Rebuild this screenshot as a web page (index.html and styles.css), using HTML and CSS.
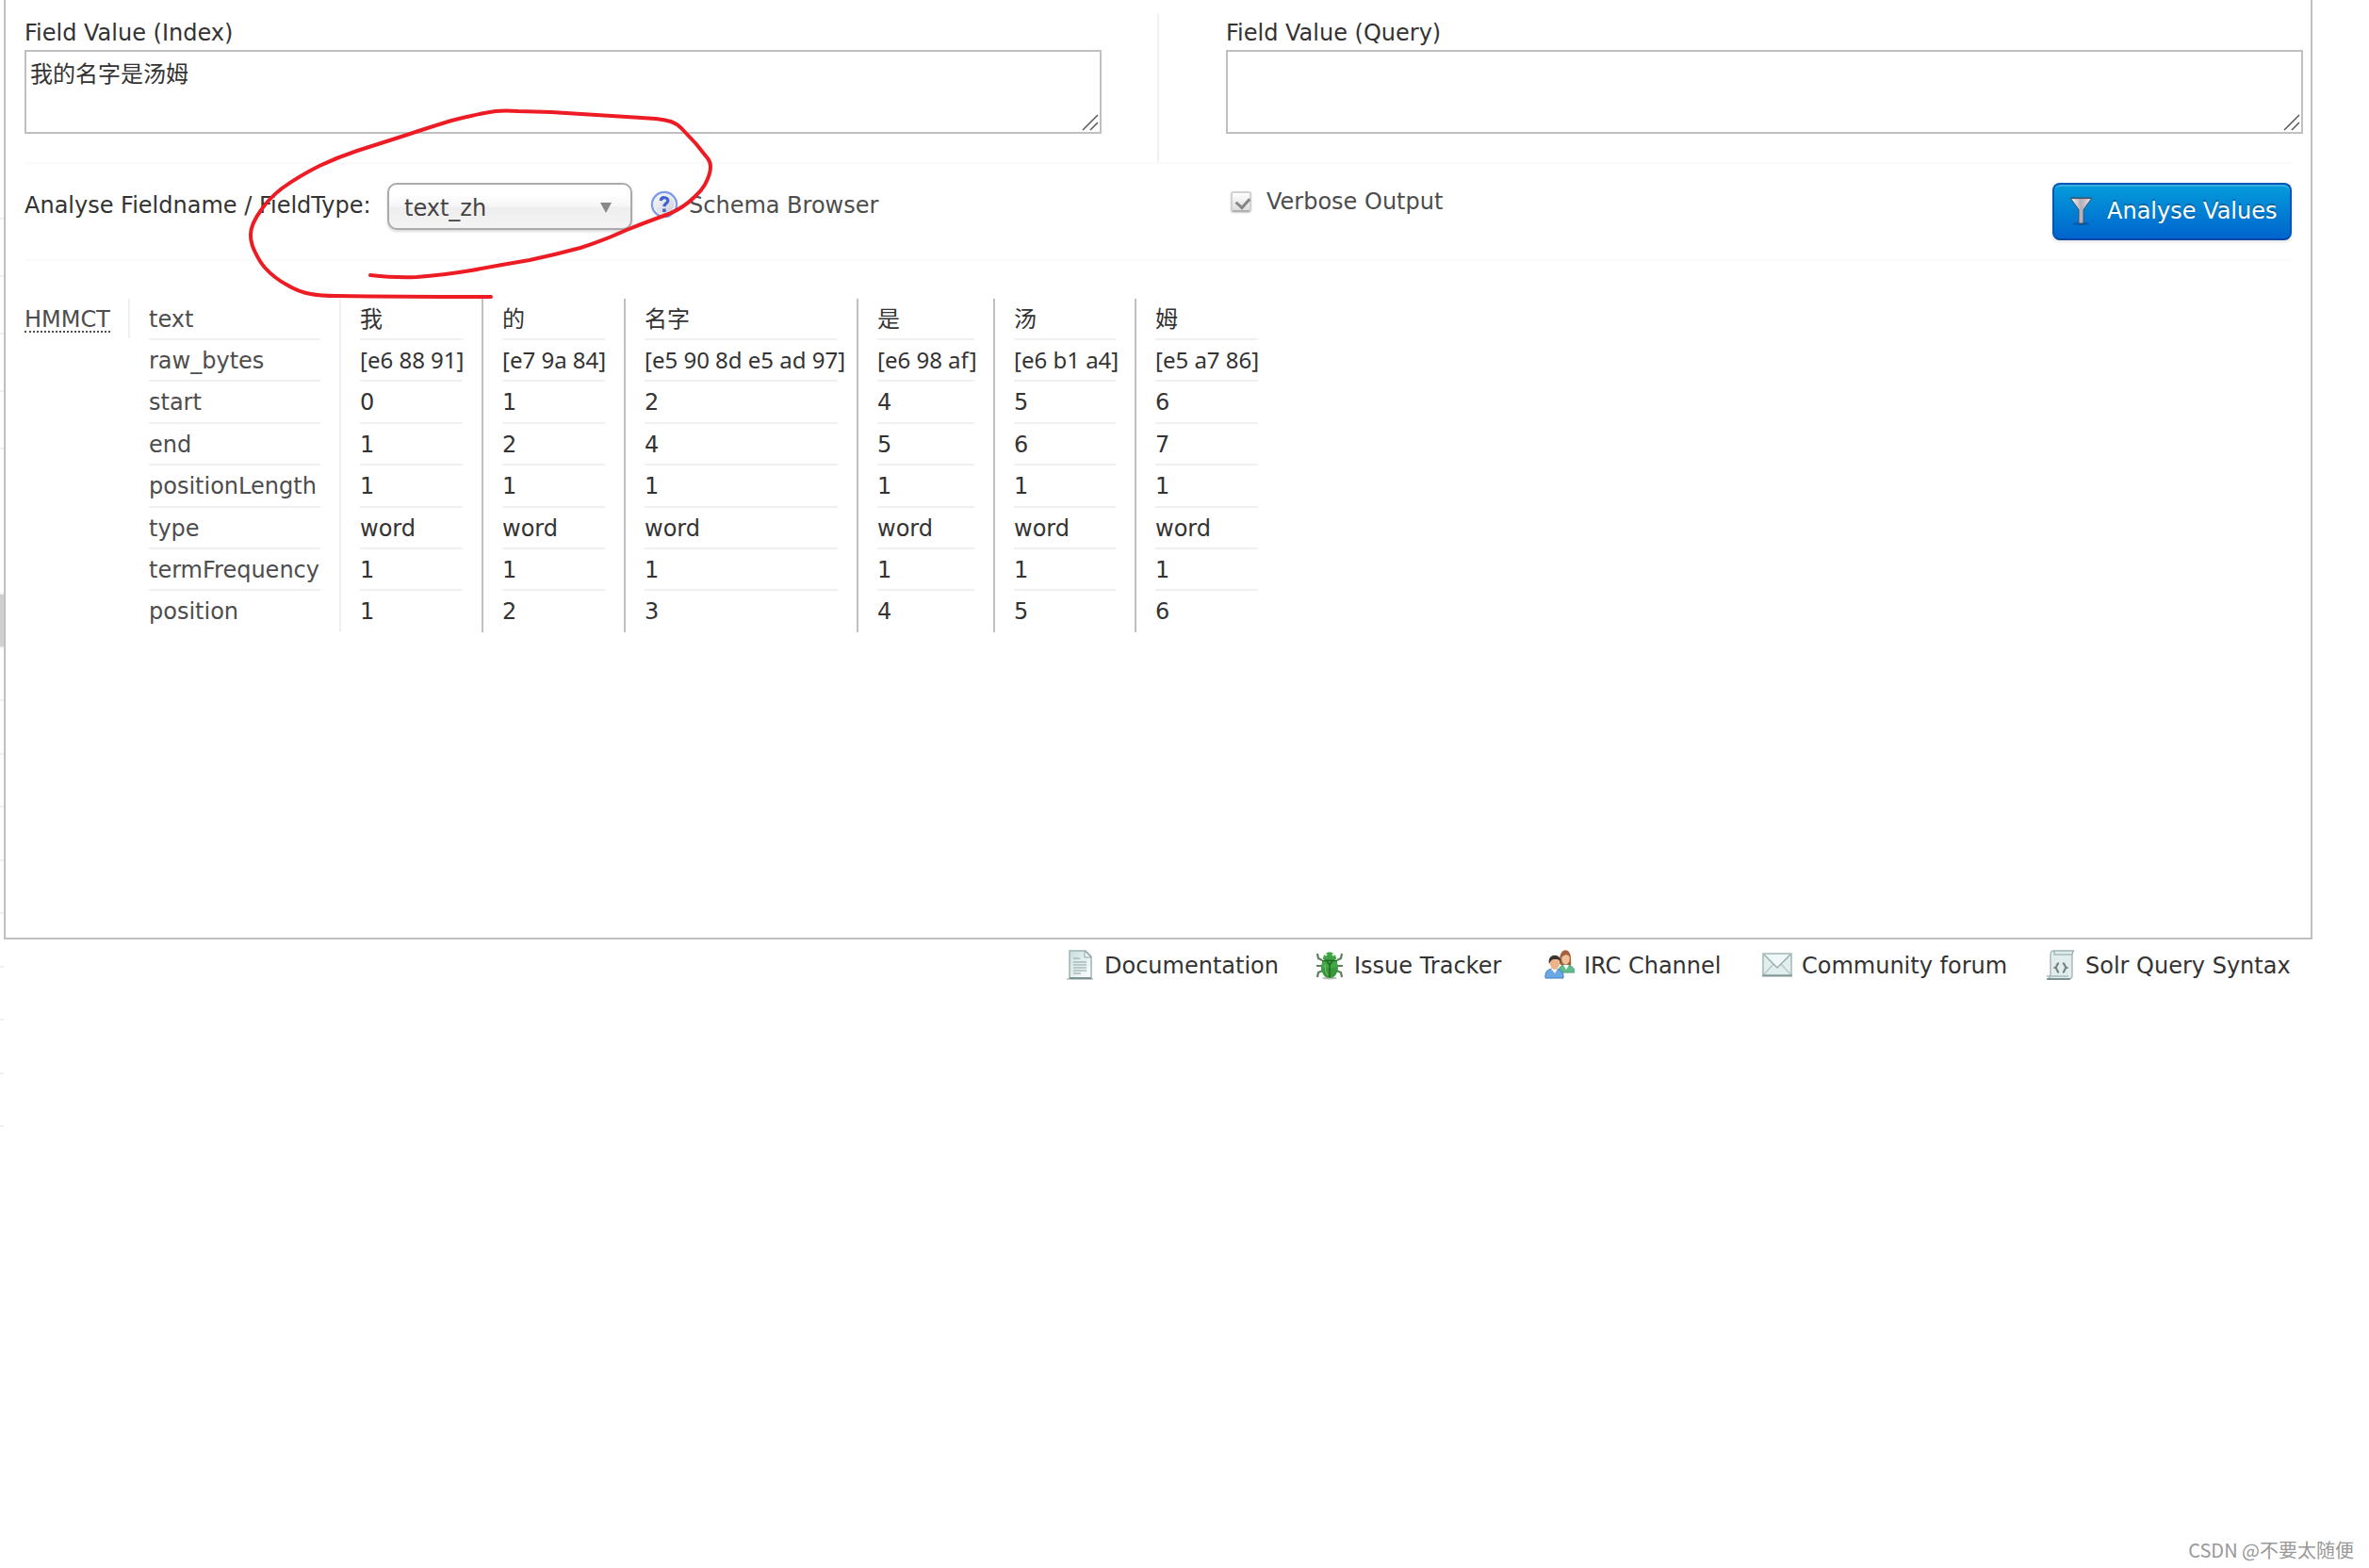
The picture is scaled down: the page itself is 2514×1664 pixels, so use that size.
FILE: index.html
```html
<!DOCTYPE html>
<html lang="en">
<head>
<meta charset="utf-8">
<title>Solr Admin</title>
<link rel="stylesheet" href="styles.css">
</head>
<body>
<div class="page">
  <ul class="nav-edge" aria-hidden="true">
    <li class="tall"></li><li class="tall"></li><li class="tall"></li><li class="tall"></li><li class="last"></li>
    <li class="active"></li><li></li><li></li><li></li><li></li><li></li><li></li><li></li><li></li><li></li><li></li>
  </ul>
  <div class="main">
    <main class="panel">
      <form class="analysis-form">
        <div class="fields">
          <div class="field">
            <label for="index-value">Field Value (Index)</label>
            <div class="area">
              <textarea id="index-value">我的名字是汤姆</textarea>
              <svg class="grip" viewBox="0 0 18 18"><path d="M1 17L17 1M9 17L17 9"/></svg>
            </div>
          </div>
          <div class="divider"></div>
          <div class="field">
            <label for="query-value">Field Value (Query)</label>
            <div class="area">
              <textarea id="query-value"></textarea>
              <svg class="grip" viewBox="0 0 18 18"><path d="M1 17L17 1M9 17L17 9"/></svg>
            </div>
          </div>
        </div>
        <div class="controls">
          <label class="type-label" for="field-type">Analyse Fieldname / FieldType:</label>
          <div class="select-box">
            <select id="field-type"><option>text_zh</option></select>
            <svg class="arrow" viewBox="0 0 12 11"><path d="M0 0h12L6 11z"/></svg>
          </div>
          <a class="schema" href="#schema">
            <svg class="help" viewBox="0 0 30 30">
              <defs><linearGradient id="hg" x1="0" y1="0" x2="1" y2="1"><stop offset="0" stop-color="#fff"/><stop offset="1" stop-color="#c4c8d2"/></linearGradient></defs>
              <circle cx="15" cy="15" r="13" fill="url(#hg)" stroke="#7f9bea" stroke-width="2.5"/>
              <circle cx="15" cy="15" r="11" fill="none" stroke="#eef2fd" stroke-width="1.6"/>
              <path d="M11.2 11c.4-4.600 8-4.200 7.600.2-.3 2.700-3.700 2.700-3.900 6" fill="none" stroke="#3f62cf" stroke-width="3.200"/>
              <path d="M13.100 19.500h3.600v3.500h-3.600z" fill="#3f62cf"/>
            </svg>
            <span>Schema Browser</span></a>
          <label class="verbose"><input type="checkbox" checked><span>Verbose Output</span></label>
          <button class="analyse" type="button">
            <svg class="funnel" viewBox="0 0 26 32">
              <defs><linearGradient id="fg" x1="0" x2="1"><stop offset="0" stop-color="#fff"/><stop offset=".5" stop-color="#b4aeb6"/><stop offset="1" stop-color="#eeeaec"/></linearGradient></defs>
              <ellipse cx="12.500" cy="29.500" rx="9" ry="1.500" fill="#034b91" opacity=".7"/>
              <path d="M1 2h23l-9 12.500V29h-5V14.500z" fill="url(#fg)" stroke="#35536f" stroke-width="1"/>
              <path d="M2 2.500h21" stroke="#4a5663" stroke-width="1.200"/>
            </svg>
            <span>Analyse Values</span></button>
        </div>
      </form>
      <section class="result">
        <div class="analyzer"><abbr title="HMMChineseTokenizer">HMMCT</abbr></div>
        <table class="tokens">
          <colgroup><col class="c-name"><col class="c-a"><col class="c-a"><col class="c-b"><col class="c-c"><col class="c-d"><col class="c-a"></colgroup>
          <tr><th scope="row"><div>text</div></th><td><div>我</div></td><td><div>的</div></td><td><div>名字</div></td><td><div>是</div></td><td><div>汤</div></td><td><div>姆</div></td></tr>
          <tr class="raw"><th scope="row"><div>raw_bytes</div></th><td><div>[e6 88 91]</div></td><td><div>[e7 9a 84]</div></td><td><div>[e5 90 8d e5 ad 97]</div></td><td><div>[e6 98 af]</div></td><td><div>[e6 b1 a4]</div></td><td><div>[e5 a7 86]</div></td></tr>
          <tr class="loose"><th scope="row"><div>start</div></th><td><div>0</div></td><td><div>1</div></td><td><div>2</div></td><td><div>4</div></td><td><div>5</div></td><td><div>6</div></td></tr>
          <tr><th scope="row"><div>end</div></th><td><div>1</div></td><td><div>2</div></td><td><div>4</div></td><td><div>5</div></td><td><div>6</div></td><td><div>7</div></td></tr>
          <tr class="loose"><th scope="row"><div>positionLength</div></th><td><div>1</div></td><td><div>1</div></td><td><div>1</div></td><td><div>1</div></td><td><div>1</div></td><td><div>1</div></td></tr>
          <tr><th scope="row"><div>type</div></th><td><div>word</div></td><td><div>word</div></td><td><div>word</div></td><td><div>word</div></td><td><div>word</div></td><td><div>word</div></td></tr>
          <tr><th scope="row"><div>termFrequency</div></th><td><div>1</div></td><td><div>1</div></td><td><div>1</div></td><td><div>1</div></td><td><div>1</div></td><td><div>1</div></td></tr>
          <tr><th scope="row"><div>position</div></th><td><div>1</div></td><td><div>2</div></td><td><div>3</div></td><td><div>4</div></td><td><div>5</div></td><td><div>6</div></td></tr>
        </table>
      </section>
    </main>
    <footer class="links">
      <a href="#docs">
        <svg viewBox="0 0 32 32"><defs><linearGradient id="pg" x1="0" y1="0" x2="1" y2="1"><stop offset="0" stop-color="#c8dede"/><stop offset="1" stop-color="#fff"/></linearGradient></defs>
          <path d="M2 31h28" stroke="#c9cfcf" stroke-width="2"/>
          <path d="M5 1h17l6 6v23H5z" fill="url(#pg)" stroke="#9fb4b4" stroke-width="1.500"/>
          <path d="M5 30h23" stroke="#6d8383" stroke-width="1.500"/>
          <path d="M21 1v7h7z" fill="#e9f3f3" stroke="#8ea6a6"/>
          <path d="M9 9h7M9 13h14M9 16h14M9 19h14M9 22h14M9 25h8" stroke="#a9bcbc" stroke-width="1.500"/></svg>
        <span>Documentation</span></a>
      <a href="#issues">
        <svg viewBox="0 0 32 32"><ellipse cx="16" cy="30" rx="8" ry="1.500" fill="#bbb"/>
          <path d="M8 11L4 9 3 4M24 11l4-2 1-5M8 17H2M24 17h6M9 22l-5 2-1 5M23 22l5 2 1 5" fill="none" stroke="#5f7d60" stroke-width="2.200"/>
          <ellipse cx="16" cy="19" rx="9" ry="11" fill="#38983a"/><path d="M8 12h16v7H8z" fill="#43a846"/>
          <path d="M9 10c0-10 14-10 14 0z" fill="#3fa343"/><path d="M8 11.500h16" stroke="#206b25" stroke-width="1.500"/>
          <path d="M13 12l3 4 3-4M16 15v14" stroke="#1e6722" stroke-width="1.500" fill="none"/>
          <circle cx="12" cy="5" r="1.500" fill="#d5f2cf"/><circle cx="20" cy="5" r="1.500" fill="#d5f2cf"/>
          <path d="M11 16c0 5 1 8 3 11" stroke="#78cb73" fill="none"/></svg>
        <span>Issue Tracker</span></a>
      <a href="#irc">
        <svg viewBox="0 0 32 32"><path d="M16 14C15-4 28-3 28 9c0 4 1 7-1 8l-10-1z" fill="#a9603c"/>
          <path d="M15 24c0-6 3-8 7-8s10 1 10 8z" fill="#62bd8c" stroke="#45a276"/>
          <path d="M20 16l3 5 3-5z" fill="#fff"/>
          <ellipse cx="22.500" cy="9.500" rx="4.200" ry="6" fill="#f2c19b"/><path d="M17 8c0-7 9-7 10-1l-4-2z" fill="#a9603c"/>
          <path d="M1 30c-1-8 4-10 9-10s11 2 10 10z" fill="#6ba9e6" stroke="#3f7dc4"/>
          <path d="M7 20l4 5 3-5z" fill="#fff"/>
          <ellipse cx="11" cy="14.500" rx="5" ry="6.500" fill="#eeb487"/><path d="M5 15C2 3 19 3 17 14c-1-4-3-4-6-4s-4 1-6 5z" fill="#3d3432"/></svg>
        <span>IRC Channel</span></a>
      <a href="#forum">
        <svg viewBox="0 0 32 32"><rect x="1" y="4" width="30" height="23" fill="#e2eeee" stroke="#a4b9b9" stroke-width="1.500"/>
          <path d="M2 26l10-11M30 26L20 15" stroke="#b6c8c8" stroke-width="1.500"/><path d="M2 5l14 14L30 5" fill="#eff7f7" stroke="#9bb1b1" stroke-width="1.500"/>
          <path d="M0 27.500h32" stroke="#829898" stroke-width="2"/></svg>
        <span>Community forum</span></a>
      <a href="#syntax">
        <svg viewBox="0 0 32 32"><path d="M8 1h22c-2 1-2 3-2 5v21c0 3-2 4-4 4H2c2-1 3-3 3-5V5c0-2 1-4 3-4z" fill="#e1eded" stroke="#9db2b2" stroke-width="1.300"/>
          <path d="M8 1c2 1 1 4 1 4h19M1 28h23" fill="none" stroke="#a6bbbb" stroke-width="1.500"/><path d="M1 31h25" stroke="#6f8484" stroke-width="1.600"/>
          <path d="M14 14c-3 1-1 3-4 5 3 1 1 4 4 5M18 14c3 1 1 3 4 5-3 1-1 4-4 5" fill="none" stroke="#777f80" stroke-width="2.200"/></svg>
        <span>Solr Query Syntax</span></a>
    </footer>
  </div>
</div>
<svg class="scribble" viewBox="0 0 520 220" aria-hidden="true">
  <path d="M143 192Q170 195 192 194Q220 192 250 187Q282 181 312 176Q340 170 366 163Q391 155 415 144Q440 134 460 127Q476 120 487 109Q494 103 498 96Q504 85 504 77Q504 72 501 68Q496 62 489 53L473 36Q468 31 462 29Q455 27 446 26L415 24L335 19L300 18Q286 17 276 18Q262 20 250 23Q240 25 229 28Q206 35 179 44L129 60Q108 67 89 76Q67 87 49 100Q35 111 27 123Q16 138 16 149Q16 158 20 166Q25 177 31 184Q41 195 54 202Q67 210 80 212Q90 214 107 214Q180 215 271 215"/>
</svg>
<div class="watermark">CSDN @不要太随便</div>
</body>
</html>
```
FILE: styles.css
```css
* { box-sizing: border-box; }
body {
  margin: 0;
  background: #fff;
  color: #333;
  font: 24px/30px Verdana, "DejaVu Sans", "Noto Sans CJK SC", sans-serif;
}
a { color: inherit; text-decoration: none; }
textarea, select, button { font: inherit; color: inherit; }

.page { display: flex; min-height: 100vh; }
.nav-edge {
  flex: 0 0 4px;
  margin: 231px 0 0;
  padding: 0;
  list-style: none;
}
.nav-edge li { height: 56px; border-top: 2px solid #f0f0f0; }
.nav-edge li:nth-child(even) { height: 57px; }
.nav-edge .tall, .nav-edge .tall:nth-child(even) { height: 61px; }
.nav-edge .last { height: 154px; }
.nav-edge .active { background: #d0d0d0; }

.main { flex: 1; min-width: 0; padding-right: 60px; }
.panel {
  min-height: 997px;
  padding: 15px 20px 0;
  border: 2px solid #c0c0c0;
  border-top: 0;
}
.fields {
  display: flex;
  justify-content: space-between;
  margin-right: -12px;
}
.field { flex: 0 1 1143px; padding-top: 5px; }
.divider { width: 2px; height: 157px; margin-left: -12px; background: #f0f0f0; }
.field label { display: block; padding-bottom: 3px; }
.area { position: relative; }
.area textarea {
  display: block;
  width: 100%;
  height: 89px;
  padding: 9px 4px;
  border: 2px solid #c0c0c0;
  background: #fff;
  resize: none;
  outline: 0;
}
.grip {
  position: absolute;
  right: 3px;
  bottom: 3px;
  width: 18px;
  height: 18px;
  fill: none;
  stroke: #555;
  stroke-width: 1.5;
}
.controls {
  display: flex;
  align-items: flex-start;
  height: 105px;
  padding-top: 20px;
  border: solid #fafafa;
  border-width: 2px 0;
}
.type-label { width: 385px; padding-top: 9px; white-space: nowrap; }
.select-box { position: relative; width: 260px; }
.select-box select {
  appearance: none;
  display: block;
  width: 100%;
  height: 50px;
  padding: 4px 40px 0 16px;
  border: 2px solid #aaa;
  border-radius: 10px;
  background: linear-gradient(#fff 20%, #f6f6f6 50%, #eee 52%, #f4f4f4);
  box-shadow: 0 2px 3px rgba(0, 0, 0, .15);
  color: #444;
}
.arrow { position: absolute; right: 22px; top: 21px; width: 12px; height: 11px; fill: #888; }
.schema {
  display: flex;
  gap: 11px;
  width: 629px;
  padding: 8px 0 0 19px;
  color: #4d4d4d;
}
.schema span { padding-top: 1px; }
.help { width: 30px; height: 30px; }
.verbose { display: flex; gap: 16px; padding: 5px 0 0 6px; color: #4d4d4d; }
.verbose input {
  appearance: none;
  width: 22px;
  height: 22px;
  margin: 4px 0 0;
  border: 2px solid #d2d2d2;
  border-bottom-color: #b0b0b0;
  border-radius: 3px;
  background: linear-gradient(#fff, #ddd);
  box-shadow: 0 1px 2px rgba(0, 0, 0, .2);
}
.verbose input:checked::before {
  content: "";
  display: block;
  width: 7px;
  height: 11px;
  margin: 2px 0 0 6px;
  border: solid #858585;
  border-width: 0 3px 3px 0;
  transform: rotate(42deg);
}
.analyse {
  display: flex;
  align-items: center;
  gap: 14px;
  width: 254px;
  height: 61px;
  margin-left: auto;
  padding: 0 0 1px 16px;
  border: 2px solid #0055b8;
  border-bottom-color: #0048a4;
  border-radius: 8px;
  background: linear-gradient(#049cdb, #0064cd);
  box-shadow: inset 0 2px 0 rgba(255, 255, 255, .2), 0 2px 4px rgba(0, 0, 0, .1);
  color: #fff;
  text-shadow: 0 -2px 0 rgba(0, 0, 0, .25);
  white-space: nowrap;
}
.funnel { flex: none; width: 26px; height: 32px; }

.result { display: flex; align-items: flex-start; margin-top: 40px; }
.analyzer {
  width: 112px;
  height: 42px;
  padding-top: 7px;
  border-right: 2px solid #f0f0f0;
  color: #4d4d4d;
}
.analyzer abbr {
  display: inline-block;
  height: 29px;
  border-bottom: 2px dotted #4d4d4d;
  text-decoration: none;
}
.tokens { width: 1217px; border-collapse: collapse; table-layout: fixed; }
.c-name { width: 222px; }
.c-a { width: 151px; }
.c-b { width: 247px; }
.c-c { width: 145px; }
.c-d { width: 150px; }
.tokens th, .tokens td { padding: 0 20px; text-align: left; white-space: nowrap; }
.tokens th { color: #4d4d4d; font-weight: normal; }
.tokens td { padding-left: 22px; background: linear-gradient(#c0c0c0, #c0c0c0) 0 0 / 2px 100% no-repeat; }
.tokens td:nth-child(2) { background-image: linear-gradient(#f0f0f0, #f0f0f0); }
.tokens div { height: 44px; padding-top: 7px; border-bottom: 2px solid #f0f0f0; }
.tokens .loose div { height: 45px; }
.tokens tr:last-child div { border-bottom: 0; }
.raw td { font-family: "Noto Sans", sans-serif; }
.tokens .raw td div { padding-top: 6px; }

.links {
  display: grid;
  grid-template-columns: 265px 244px 231px 301px 263px;
  justify-content: end;
  padding: 11px 20px 0 0;
}
.links a { display: flex; gap: 10px; white-space: nowrap; }
.links svg { flex: none; width: 32px; height: 32px; }
.links span { padding-top: 2px; }

.scribble {
  position: absolute;
  left: 250px;
  top: 100px;
  width: 520px;
  height: 220px;
  fill: none;
  stroke: #ed1c24;
  stroke-width: 4;
  stroke-linecap: round;
  stroke-linejoin: round;
  pointer-events: none;
}
.watermark {
  position: absolute;
  right: 16px;
  bottom: 4px;
  color: #999;
  font: 20px/30px "Noto Sans CJK SC", sans-serif;
}
```
